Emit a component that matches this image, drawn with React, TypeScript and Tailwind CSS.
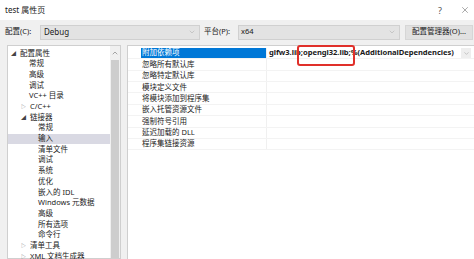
import { ChevronDown, ChevronUp, X } from "lucide-react";

const tree: { label: string; indent: number; arrow?: "open" | "closed"; selected?: boolean }[] = [
  { label: "配置属性", indent: 0, arrow: "open" },
  { label: "常规", indent: 1 },
  { label: "高级", indent: 1 },
  { label: "调试", indent: 1 },
  { label: "VC++ 目录", indent: 1 },
  { label: "C/C++", indent: 1, arrow: "closed" },
  { label: "链接器", indent: 1, arrow: "open" },
  { label: "常规", indent: 2 },
  { label: "输入", indent: 2, selected: true },
  { label: "清单文件", indent: 2 },
  { label: "调试", indent: 2 },
  { label: "系统", indent: 2 },
  { label: "优化", indent: 2 },
  { label: "嵌入的 IDL", indent: 2 },
  { label: "Windows 元数据", indent: 2 },
  { label: "高级", indent: 2 },
  { label: "所有选项", indent: 2 },
  { label: "命令行", indent: 2 },
  { label: "清单工具", indent: 1, arrow: "closed" },
  { label: "XML 文档生成器", indent: 1, arrow: "closed" },
];

const props = [
  "附加依赖项",
  "忽略所有默认库",
  "忽略特定默认库",
  "模块定义文件",
  "将模块添加到程序集",
  "嵌入托管资源文件",
  "强制符号引用",
  "延迟加载的 DLL",
  "程序集链接资源",
];

// text starts at 20 / 29 / 38px from the dialog edge, tree content starts at 8px
const leafPad = ["pl-[12px]", "pl-[21px]", "pl-[30px]"];
const arrowPad = ["pl-[3px]", "pl-[13px]", "pl-[22px]"];

export default function App() {
  return (
    <div
      className="w-[474px] h-[259px] overflow-hidden bg-[#f0f0f0] text-[#1a1a1a] text-[7.5px] leading-none flex flex-col"
      style={{ fontFamily: '"Noto Sans", "Noto Sans CJK SC", sans-serif' }}
    >
      {/* Title */}
      <div className="h-[20px] bg-white flex items-center justify-between pl-[5px] pr-[4px] shrink-0">
        <span className="text-[8px]">test 属性页</span>
        <div className="flex items-center gap-[18px] text-[#555]">
          <span className="text-[9px]">?</span>
          <X className="w-[10px] h-[10px]" strokeWidth={1.2} />
        </div>
      </div>

      {/* Toolbar */}
      <div className="h-[22px] flex items-center pl-[5px] shrink-0 mt-[1px]">
        <span className="w-[35px]">配置(C):</span>
        <div className="w-[160px] h-[15px] bg-[#e3e3e3] border border-[#d0d0d0] flex items-center justify-between pl-[3px] pr-[3px]">
          <span className="text-[8px]">Debug</span>
          <ChevronDown className="w-[8px] h-[8px] text-[#999]" strokeWidth={1.2} />
        </div>
        <span className="ml-[4px] w-[34px]">平台(P):</span>
        <div className="w-[162px] h-[15px] bg-[#e3e3e3] border border-[#d0d0d0] flex items-center justify-between pl-[2px] pr-[3px]">
          <span>x64</span>
          <ChevronDown className="w-[8px] h-[8px] text-[#999]" strokeWidth={1.2} />
        </div>
        <div className="ml-[5px] w-[68px] h-[15px] bg-[#e1e1e1] border border-[#d6d6d6] flex items-center justify-center">
          配置管理器(O)...
        </div>
      </div>

      {/* Body */}
      <div className="flex-1 flex pl-[7px] pt-[2px] gap-[6px] min-h-0">
        {/* Tree */}
        <div className="w-[114px] bg-white border border-[#cfcfcf] flex min-h-0">
          <div className="flex-1 pt-[2px] flex flex-col">
            {tree.map((t, i) => (
              <div
                key={i}
                className={`h-[10.7px] shrink-0 flex items-center ${t.arrow ? arrowPad[t.indent] : leafPad[t.indent]} ${t.selected ? "bg-[#d9d9e3]" : ""}`}
              >
                {t.arrow === "open" && <span className="w-[9px] text-[5px] text-[#444]">◢</span>}
                {t.arrow === "closed" && <span className="w-[9px] text-[5px] text-[#777]">▷</span>}
                <span>{t.label}</span>
              </div>
            ))}
          </div>
          <div className="w-[10px] bg-[#f0f0f0] flex flex-col items-center">
            <ChevronUp className="w-[8px] h-[8px] mt-[3px] text-[#606060]" strokeWidth={1.6} />
            <div className="w-[8px] flex-1 bg-[#cdcdcd] mt-[3px]" />
          </div>
        </div>

        {/* Property grid */}
        <div className="flex-1 bg-white border-l border-t border-[#cfcfcf] relative">
          <div className="pt-[2px] flex flex-col">
            {props.map((p, i) => (
              <div key={i} className="h-[11.37px] flex border-b border-[#f3f3f3]">
                <div className="w-[13px] shrink-0" />
                <div
                  className={`w-[125px] shrink-0 flex items-center pl-[1px] ${i === 0 ? "bg-[#0078d7] text-white" : ""}`}
                >
                  {p}
                </div>
                <div className="flex-1 flex items-center justify-between pl-[2px] pr-[3px] border-l border-[#f0f0f0]">
                  {i === 0 && (
                    <>
                      <span className="font-bold text-[7.6px] tracking-[-0.05px]">
                        glfw3.lib;opengl32.lib;%(AdditionalDependencies)
                      </span>
                      <span className="w-[10px] h-[10px] bg-[#eeeeee] flex items-center justify-center">
                        <ChevronDown className="w-[7px] h-[7px] text-[#888]" strokeWidth={1.4} />
                      </span>
                    </>
                  )}
                </div>
              </div>
            ))}
          </div>
          <div className="absolute left-[169px] top-[-1px] w-[58px] h-[21px] border-2 border-[#e0302a] rounded-[3px]" />
        </div>
      </div>
    </div>
  );
}
